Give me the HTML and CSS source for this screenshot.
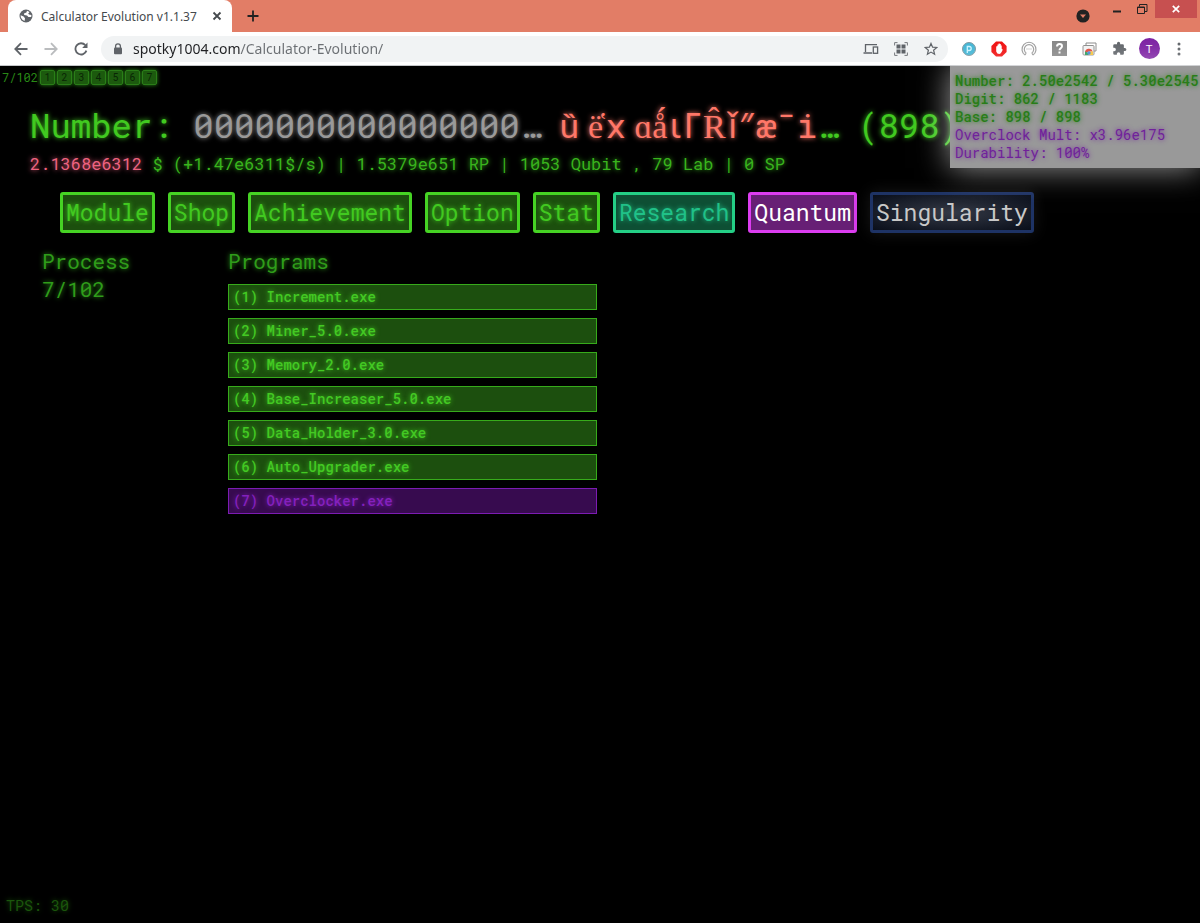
FILE: index.html
```html
<!DOCTYPE html>
<html lang="en">
<head>
<meta charset="utf-8">
<meta name="viewport" content="width=device-width, initial-scale=1">
<title>Calculator Evolution v1.1.37</title>
<link rel="stylesheet" href="styles.css">
</head>
<body>
<header class="browser">
  <div class="titlebar">
    <div class="tab">
      <svg class="globe" width="14" height="14" viewBox="0 0 14 14" aria-hidden="true"><circle cx="7" cy="7" r="6.5" fill="#5f6368"/><path d="M1.6 6.2 4.6 7.4 6 9.2 5.6 12 3.4 10.8 1.8 8.6ZM8 1.8 7.4 3.4 5 4.4 5.2 6 8 6.4 9.4 8 12.2 8 12.4 6 10 5.6 9.2 4.4 10.6 3Z" fill="#fff"/></svg>
      <span class="tab-title">Calculator Evolution v1.1.37</span>
      <button class="plain tab-close" aria-label="Close tab"><svg width="10" height="10" viewBox="0 0 10 10"><path d="M1.5 1.5 8.5 8.5M8.5 1.5 1.5 8.5" stroke="#45494d" stroke-width="1.8"/></svg></button>
    </div>
    <button class="plain new-tab" aria-label="New tab"><svg width="12" height="12" viewBox="0 0 12 12"><path d="M6 .5V11.500M.5 6H11.500" stroke="#222" stroke-width="1.8"/></svg></button>
    <div class="window-buttons">
      <button class="plain updates" aria-label="Search tabs"><svg width="14" height="14" viewBox="0 0 14 14"><circle cx="7" cy="7" r="6.600" fill="#222"/><path d="M4 5.400H10L7 9Z" fill="#e27d66"/></svg></button>
      <button class="plain minimize" aria-label="Minimize"><svg width="8" height="3" viewBox="0 0 8 3"><path d="M0 1.500H8" stroke="#222" stroke-width="2"/></svg></button>
      <button class="plain restore" aria-label="Restore"><svg width="11" height="10" viewBox="0 0 11 10" fill="none" stroke="#222"><path d="M.5 3H7.500V9.500H.5ZM.5 3.500H7.500M2.500 2.500V.5H10V7.500H8"/></svg></button>
      <button class="plain close" aria-label="Close"><svg width="8" height="8" viewBox="0 0 8 8"><path d="M.8.8 7.200 7.200M7.200.8.8 7.200" stroke="#fff" stroke-width="1.700"/></svg></button>
    </div>
  </div>
  <div class="toolbar">
    <button class="plain cell" aria-label="Back"><svg width="14" height="14" viewBox="0 0 14 14" fill="none" stroke="#5f6368" stroke-width="1.800"><path d="M13.500 7H1.500M7 1.200 1.300 7 7 12.800"/></svg></button>
    <button class="plain cell" aria-label="Forward"><svg width="14" height="14" viewBox="0 0 14 14" fill="none" stroke="#babcbe" stroke-width="1.800"><path d="M.5 7H12.500M7 1.200 12.700 7 7 12.800"/></svg></button>
    <button class="plain cell" aria-label="Reload"><svg width="14" height="14" viewBox="0 0 14 14"><path d="M11.300 3.200A5.600 5.600 0 1 0 12.400 8.600" fill="none" stroke="#5f6368" stroke-width="1.800"/><path d="M13.500.6V6H8.200Z" fill="#5f6368"/></svg></button>
    <div class="address">
      <svg width="10" height="12" viewBox="0 0 10 12" aria-hidden="true"><path d="M2.600 5V3.200a2.400 2.400 0 0 1 4.800 0V5" fill="none" stroke="#5f6368" stroke-width="1.300"/><rect x="1" y="4.500" width="8" height="6.800" rx="1" fill="#5f6368"/></svg>
      <input class="url" type="text" aria-label="Address" value="spotky1004.com/Calculator-Evolution/">
      <button class="plain cell" aria-label="Send to device"><svg width="16" height="12" viewBox="0 0 16 12" fill="none" stroke="#5f6368" stroke-width="1.300"><path d="M2.500 9V1.700H14M.5 10H9"/><rect x="10.300" y="4" width="4.300" height="6.300"/></svg></button>
      <button class="plain cell" aria-label="QR code"><svg width="14" height="14" viewBox="0 0 14 14"><path d="M.6 3.500V.6H3.500M10.500.6H13.400V3.500M13.400 10.500V13.400H10.500M3.500 13.400H.6V10.500" fill="none" stroke="#777a7e"/><path d="M2.500 2.500H6.500V6.500H2.500ZM7.500 2.500H11.500V6.500H7.500ZM2.500 7.500H6.500V11.500H2.500ZM7.500 7.500H11.500V11.500H7.500Z" fill="#5f6368"/></svg></button>
      <button class="plain cell" aria-label="Bookmark"><svg width="14" height="14" viewBox="0 0 14 14"><path d="M7 1.400 8.600 5.200 12.800 5.500 9.600 8.200 10.600 12.300 7 10.100 3.400 12.300 4.400 8.200 1.200 5.500 5.400 5.200Z" fill="none" stroke="#5f6368" stroke-width="1.200"/></svg></button>
    </div>
    <button class="plain cell" aria-label="Video extension"><svg width="14" height="14" viewBox="0 0 14 14"><circle cx="7" cy="7" r="6.500" fill="#3fb4d4" stroke="#7c949c"/><path d="M5.300 11V4.500H7.200a2 2 0 0 1 0 4H5.300" fill="none" stroke="#c9f4ff" stroke-width="1.300"/></svg></button>
    <button class="plain cell" aria-label="Ad blocker"><svg width="16" height="16" viewBox="0 0 16 16"><path d="M5 .4H11L15.600 5V11L11 15.600H5L.4 11V5Z" fill="#f00b0b"/><path d="M5.200 5.500V10.500Q6 13 8.200 13 10 13 11.800 8.500L10.700 8V4.500H9.800V3H8.800V2.600H7.600V3.400H6.500V5Z" fill="#fff"/></svg></button>
    <button class="plain cell" aria-label="Headset extension"><svg width="16" height="16" viewBox="0 0 16 16" fill="none" stroke="#9b9b9b"><path d="M4 14A7 7 0 1 1 12 14M5.200 12A4.700 4.700 0 1 1 10.800 12M4 14 5.200 12M12 14 10.800 12" stroke-width="1.200"/><path d="M5.500 8H10.500" stroke-dasharray="1 1"/></svg></button>
    <button class="plain cell" aria-label="Unknown extension"><svg width="15" height="15" viewBox="0 0 15 15"><rect width="15" height="15" fill="#858585"/><path d="M5 5.600Q5 3 7.500 3T10 5.300Q10 6.500 8.600 7.300 7.500 8 7.500 9.200M7.500 10.600V12.500" fill="none" stroke="#fff" stroke-width="2"/></svg></button>
    <button class="plain cell" aria-label="Web store"><svg width="15" height="14" viewBox="0 0 15 14"><path d="M4 3V1H14V9H12" fill="none" stroke="#888"/><rect x="1" y="3.500" width="11" height="9.500" rx="1" fill="#f2f2f2" stroke="#8a8a8a"/><path d="M3 11A4 4 0 0 1 10.800 9.500H7Z" fill="#de4437"/><path d="M3 9.500V13H6.500L7 11Z" fill="#269b55"/><path d="M7 13H11V9.500H8Z" fill="#f5c336"/><circle cx="7" cy="11" r="1.700" fill="#4285d8"/></svg></button>
    <button class="plain cell" aria-label="Extensions"><svg width="15" height="15" viewBox="0 0 24 24"><path d="M20.500 11H19V7a2 2 0 0 0-2-2h-4V3.500a2.500 2.500 0 0 0-5 0V5H4a2 2 0 0 0-2 2v3.800h1.500a2.700 2.700 0 0 1 0 5.400H2V20a2 2 0 0 0 2 2h3.800v-1.500a2.700 2.700 0 0 1 5.400 0V22H17a2 2 0 0 0 2-2v-4h1.500a2.500 2.500 0 0 0 0-5Z" fill="#5f6368"/></svg></button>
    <button class="plain cell" aria-label="Profile"><span class="avatar">T</span></button>
    <button class="plain cell" aria-label="Menu"><svg width="4" height="14" viewBox="0 0 4 14" fill="#5f6368"><circle cx="2" cy="2" r="1.500"/><circle cx="2" cy="7" r="1.500"/><circle cx="2" cy="12" r="1.500"/></svg></button>
  </div>
</header>
<main class="game">
  <div class="status">
    <span>7/102</span>
    <ol class="slots"><li>1</li><li>2</li><li>3</li><li>4</li><li>5</li><li>6</li><li>7</li></ol>
  </div>
  <h1 class="number"><span>Number: </span><span class="digits">0000000000000000…</span><span class="glyphs"><span>ȕ<span class="serif"> ë̔</span></span><span>x<span class="serif"> ɑǻ</span></span><span class="sans">ι</span><span class="sans">Γ</span><span class="serif">R̂</span><span class="sans">ǐ</span><span class="sans">″</span><span>æ¯i</span></span><span>… (898)</span></h1>
  <p class="resources"><span class="money">2.1368e6312</span> $ (+1.47e6311$/s) | 1.5379e651 RP | 1053 Qubit , 79 Lab | 0 SP</p>
  <nav class="menu">
    <button class="item">Module</button>
    <button class="item">Shop</button>
    <button class="item">Achievement</button>
    <button class="item">Option</button>
    <button class="item">Stat</button>
    <button class="item research">Research</button>
    <button class="item quantum">Quantum</button>
    <button class="item singularity">Singularity</button>
  </nav>
  <div class="columns">
    <section class="process">Process<br>7/102</section>
    <section class="programs">
      <h2>Programs</h2>
      <button class="program">(1) Increment.exe</button>
      <button class="program">(2) Miner_5.0.exe</button>
      <button class="program">(3) Memory_2.0.exe</button>
      <button class="program">(4) Base_Increaser_5.0.exe</button>
      <button class="program">(5) Data_Holder_3.0.exe</button>
      <button class="program">(6) Auto_Upgrader.exe</button>
      <button class="program overclock">(7) Overclocker.exe</button>
    </section>
  </div>
  <footer class="tps">TPS: 30</footer>
  <aside class="info">
    <div class="strong">Number: 2.50e2542 / 5.30e2545</div>
    <div class="strong">Digit: 862 / 1183</div>
    <div class="strong">Base: 898 / 898</div>
    <div class="violet">Overclock Mult: x3.96e175</div>
    <div class="violet">Durability: 100%</div>
  </aside>
</main>
</body>
</html>
```
FILE: styles.css
```css
* { box-sizing: border-box; }
body {
  margin: 0;
  min-height: 100vh;
  display: flex;
  flex-direction: column;
  background: #000;
  overflow-x: hidden;
}
.plain {
  display: grid;
  place-items: center;
  padding: 0;
  border: 0;
  background: none;
}

/* Browser chrome */
.browser {
  font-family: "Noto Sans", "Open Sans", sans-serif;
  background: #fff;
  border-bottom: 1px solid #c4c6c9;
}
.titlebar {
  display: flex;
  height: 32px;
  padding-left: 8px;
  background: #e27d66;
}
.tab {
  display: flex;
  align-items: center;
  width: 224px;
  padding: 0 10px 0 11px;
  border-radius: 8px 8px 0 0;
  background: #fff;
}
.tab-title {
  flex: 1;
  margin-left: 8px;
  font-size: 12px;
  color: #45494d;
  white-space: nowrap;
}
.new-tab { width: 42px; }
.window-buttons {
  display: flex;
  align-items: flex-start;
  margin-left: auto;
  padding-right: 3px;
}
.updates { height: 32px; margin-right: 23px; }
.minimize { height: 22px; margin-right: 16px; }
.restore { height: 18px; margin-right: 7px; }
.close { width: 42px; height: 18px; background: #c75050; }
.toolbar {
  display: flex;
  align-items: center;
  height: 33px;
  padding: 0 6px;
}
.cell { flex: none; width: 30px; height: 26px; }
.address {
  flex: 1;
  display: flex;
  align-items: center;
  height: 26px;
  margin: 0 6px 0 5px;
  padding: 0 2px 0 12px;
  border-radius: 13px;
  background: #f1f3f4;
}
.url {
  flex: 1;
  min-width: 0;
  margin-left: 10px;
  padding: 0;
  border: 0;
  outline: 0;
  font: 14px/20px "Noto Sans", "Open Sans", sans-serif;
  color: transparent;
  background: linear-gradient(90deg, #202124 107px, #6b6f73 107px);
  background-clip: text;
  -webkit-background-clip: text;
}
.avatar {
  display: grid;
  place-items: center;
  width: 21px;
  height: 21px;
  border-radius: 50%;
  background: #7b1fa2;
  color: #fff;
  font-size: 11px;
}

/* Game */
.game {
  flex: 1;
  position: relative;
  display: flex;
  flex-direction: column;
  font-family: "Roboto Mono", "DejaVu Sans Mono", monospace;
  color: #39b41d;
  text-shadow: 0 0 5px currentColor;
}
.game button { font-family: inherit; text-shadow: inherit; }
.status {
  display: flex;
  align-items: center;
  gap: 2px;
  padding: 3px 2px 0;
  font-size: 12px;
  line-height: 16px;
  color: #298a16;
  text-shadow: none;
}
.slots {
  display: flex;
  gap: 2px;
  margin: 0;
  padding: 0;
  list-style: none;
}
.slots li {
  width: 15px;
  height: 15px;
  border: 1px solid #2a7d18;
  border-radius: 2px;
  background: #1c5a0e;
  box-shadow: 0 0 4px #2a8c16;
  color: #092605;
  font-size: 10px;
  line-height: 13px;
  text-align: center;
}
.number {
  display: flex;
  align-items: baseline;
  height: 48px;
  margin: 16px 0 0 30px;
  font-size: 34px;
  font-weight: 400;
  line-height: 48px;
  white-space: pre;
  color: #41c920;
}
.digits { color: #999; }
.glyphs {
  display: flex;
  align-items: baseline;
  justify-content: space-between;
  width: 258px;
  margin-left: 19px;
  color: #ff7768;
}
.serif { font-family: "Liberation Serif", serif; }
.sans { font-family: "Noto Sans", sans-serif; }
.resources {
  margin: 3px 0 0 30px;
  font-size: 17px;
  line-height: 24px;
}
.money { color: #ee6380; }
.menu {
  display: flex;
  flex-wrap: wrap;
  gap: 13px;
  margin: 16px 0 0 60px;
}
.item {
  padding: 0 3px;
  border: 3px solid #46d324;
  border-radius: 3px;
  background: #1c4f0e;
  color: #41c920;
  font-size: 23px;
  line-height: 35px;
}
.research { border-color: #24cf86; background: #0e4f34; color: #20c188; }
.game .quantum { border-color: #dc3df0; background: #671f75; color: #fff; text-shadow: none; }
.game .singularity {
  border-color: #1e3365;
  background: radial-gradient(#343945, #090e1a);
  color: #c8c8c8;
  text-shadow: none;
  box-shadow: 0 0 16px #181818;
}
.columns {
  display: flex;
  margin: 14px 0 0 42px;
  font-size: 21px;
  line-height: 28px;
  color: #2f9c1a;
}
.process { width: 186px; }
.programs {
  display: flex;
  flex-direction: column;
  gap: 8px;
  flex: 0 1 369px;
}
.programs h2 {
  margin: 0 0 1px;
  font: inherit;
}
.program {
  padding: 0 4px;
  border: 1px solid #37ab1b;
  background: #1c4f0e;
  color: #43c923;
  font-size: 14px;
  font-weight: 500;
  line-height: 24px;
  text-align: left;
}
.overclock { border-color: #7c1cb2; background: #370b4f; color: #8420bd; }
.tps {
  margin-top: auto;
  padding: 0 6px 8px;
  font-size: 15px;
  line-height: 20px;
  color: #1b560c;
}
.info {
  position: absolute;
  top: 0;
  right: 0;
  width: 250px;
  padding: 6px 0 6px 5px;
  background: #999;
  box-shadow: 0 0 30px rgba(255, 255, 255, 0.6);
  color: #287d18;
  font-size: 14px;
  line-height: 18px;
  white-space: nowrap;
}
.strong { font-weight: 500; }
.violet { color: #70219b; }
```
